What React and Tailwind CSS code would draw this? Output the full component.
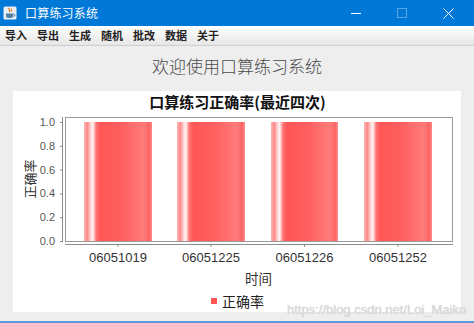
import React from 'react';

const menus = ['导入', '导出', '生成', '随机', '批改', '数据', '关于'];
const ticks = [0, 0.2, 0.4, 0.6, 0.8, 1.0];
const bars = [
    { label: '06051019', x: 71, w: 68, value: 1 },
    { label: '06051225', x: 164, w: 68, value: 1 },
    { label: '06051226', x: 258, w: 67, value: 1 },
    { label: '06051252', x: 351, w: 68, value: 1 },
];

// value -> y inside the chart svg
const yOf = (v) => 150 - v * 119;

const JavaIcon = () => (
    <svg width="14" height="14" viewBox="0 0 14 14">
        <rect x="0.5" y="0.5" width="13" height="13" rx="1.5" fill="#e9eef5" />
        <path d="M6 2 C5 3.5 8 4 6.5 6" stroke="#e76f00" strokeWidth="1.2" fill="none" />
        <path d="M8.5 2.5 C7.8 3.6 9.5 4.2 8.3 5.6" stroke="#e76f00" strokeWidth="1" fill="none" />
        <path d="M3 7.5 h7 v2.5 a2 2 0 0 1 -2 2 h-3 a2 2 0 0 1 -2 -2 z" fill="#5382a1" />
        <path d="M10 8.2 h1 a1 1 0 0 1 0 2 h-1" stroke="#5382a1" strokeWidth="0.9" fill="none" />
    </svg>
);

const Chart = () => (
    <svg width="448" height="221" viewBox="0 0 448 221">
        <defs>
            <linearGradient id="barFill" x1="0" y1="0" x2="1" y2="0">
                <stop offset="0" stopColor="#ffb4b4" />
                <stop offset="0.05" stopColor="#ff8a8a" />
                <stop offset="0.1" stopColor="#ffd9d9" />
                <stop offset="0.13" stopColor="#fff4f4" />
                <stop offset="0.18" stopColor="#ff7474" />
                <stop offset="0.24" stopColor="#ff5656" />
                <stop offset="0.55" stopColor="#ff5f5f" />
                <stop offset="0.88" stopColor="#ff7b7b" />
                <stop offset="0.96" stopColor="#ff6464" />
                <stop offset="1" stopColor="#ff8e8e" />
            </linearGradient>
        </defs>

        <text x="224.5" y="10" textAnchor="middle" dominantBaseline="central" fontSize="15" fill="#111"
            className="font-semibold font-['Noto_Sans_CJK_SC','Noto_Sans',sans-serif]">
            口算练习正确率(最近四次)
        </text>

        {/* plot area */}
        <rect x="52.5" y="26.5" width="387" height="124" fill="#fff" stroke="#9a9a9a" />
        {bars.map(b => (
            <rect key={b.label} x={b.x} y={yOf(b.value)} width={b.w} height={150 - yOf(b.value)} fill="url(#barFill)" />
        ))}

        {/* y axis */}
        <line x1="49.5" y1="26" x2="49.5" y2="151" stroke="#8c8c8c" />
        {ticks.map(t => (
            <g key={t}>
                <line x1="47" y1={yOf(t) + 0.5} x2="49" y2={yOf(t) + 0.5} stroke="#8c8c8c" />
                <text x="42" y={yOf(t)} textAnchor="end" dominantBaseline="central" fontSize="11" fill="#555"
                    className="font-['Liberation_Sans',sans-serif]">
                    {t.toFixed(1)}
                </text>
            </g>
        ))}
        <text x="16" y="88" textAnchor="middle" dominantBaseline="central" fontSize="13" fill="#333" transform="rotate(-90 16 88)"
            className="font-['Noto_Sans_CJK_SC',sans-serif]">
            正确率
        </text>

        {/* x axis */}
        <line x1="52" y1="153.5" x2="440" y2="153.5" stroke="#8c8c8c" />
        {bars.map(b => (
            <g key={b.label}>
                <line x1={b.x + b.w / 2} y1="154" x2={b.x + b.w / 2} y2="156" stroke="#8c8c8c" />
                <text x={b.x + b.w / 2} y="166" textAnchor="middle" dominantBaseline="central" fontSize="13" fill="#333"
                    className="font-['Liberation_Sans',sans-serif]">
                    {b.label}
                </text>
            </g>
        ))}
        <text x="245.5" y="187" textAnchor="middle" dominantBaseline="central" fontSize="13.5" fill="#333"
            className="font-['Noto_Sans_CJK_SC',sans-serif]">
            时间
        </text>

        {/* legend */}
        <rect x="198" y="207" width="6" height="6" fill="#ff5555" />
        <text x="209" y="210" dominantBaseline="central" fontSize="14" fill="#222"
            className="font-['Noto_Sans_CJK_SC',sans-serif]">
            正确率
        </text>
    </svg>
);

export default function App() {
    return (
        <div className="relative w-[474px] h-[323px] bg-[#eeeeee] flex flex-col overflow-hidden font-['Noto_Sans_CJK_SC','Noto_Sans',sans-serif]">
            {/* title bar */}
            <div className="h-[26px] bg-[#0078d7] flex items-center text-white shrink-0">
                <div className="ml-[3px] w-[14px] h-[14px]"><JavaIcon /></div>
                <span className="ml-[8px] text-[12px] tracking-[0.2px]">口算练习系统</span>
                <div className="flex-1" />
                <div className="w-[46px] h-full flex items-center justify-center">
                    <div className="w-[10px] h-px bg-white" />
                </div>
                <div className="w-[46px] h-full flex items-center justify-center">
                    <div className="w-[10px] h-[10px] border border-white/35" />
                </div>
                <div className="w-[46px] h-full flex items-center justify-center mr-[3px]">
                    <svg width="11" height="11" viewBox="0 0 11 11">
                        <path d="M0.5 0.5 L10.5 10.5 M10.5 0.5 L0.5 10.5" stroke="#fff" strokeWidth="1" />
                    </svg>
                </div>
            </div>

            {/* menu bar */}
            <div className="h-[20px] flex items-center bg-gradient-to-b from-white to-[#e6e6e6] border-b border-[#cfcfcf] shrink-0">
                {menus.map(m => (
                    <span key={m} className="px-[5px] text-[11px] font-bold text-[#222] leading-none">{m}</span>
                ))}
            </div>

            {/* welcome */}
            <div className="h-[45px] flex items-center justify-center shrink-0 pb-[5px]">
                <span className="text-[17px] font-light text-[#4a4a4a]">欢迎使用口算练习系统</span>
            </div>

            {/* chart panel */}
            <div className="mx-[13px] h-[221px] bg-white shrink-0">
                <Chart />
            </div>

            <div className="flex-1" />
            <div className="h-[2px] bg-[#5b9bd8] shrink-0" />

            <span className="absolute left-[287px] top-[300px] text-[13px] text-[#dcdcdc] [text-shadow:0_0_1px_#c8c8c8] font-['Liberation_Sans',sans-serif]">
                https://blog.csdn.net/Loi_Maiko
            </span>
        </div>
    );
}
